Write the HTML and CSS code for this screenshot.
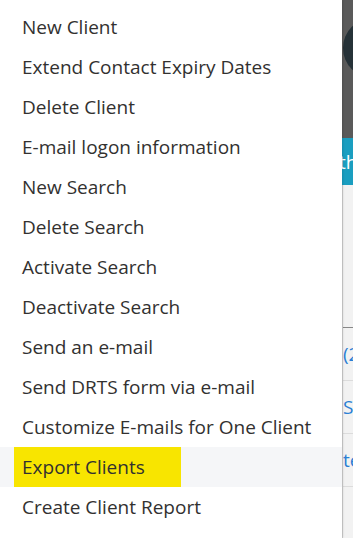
FILE: index.html
```html
<!DOCTYPE html>
<html>
<head>
<meta charset="utf-8">
<link rel="stylesheet" href="styles.css">
</head>
<body>
<div class="page">
  <ul class="menu">
    <li class="item">New Client</li>
    <li class="item">Extend Contact Expiry Dates</li>
    <li class="item">Delete Client</li>
    <li class="item">E-mail logon information</li>
    <li class="item">New Search</li>
    <li class="item">Delete Search</li>
    <li class="item">Activate Search</li>
    <li class="item">Deactivate Search</li>
    <li class="item">Send an e-mail</li>
    <li class="item">Send DRTS form via e-mail</li>
    <li class="item">Customize E-mails for One Client</li>
    <li class="item hover"><span class="mark">Export Clients</span></li>
    <li class="item">Create Client Report</li>
  </ul>
  <div class="behind">
    <div class="header"><div class="avatar"></div></div>
    <div class="tab">th</div>
    <div class="table">
      <div class="blank"></div>
      <div class="row">(2</div>
      <div class="row">Sa</div>
      <div class="row">te</div>
      <div class="row"></div>
    </div>
  </div>
</div>
</body>
</html>
```
FILE: styles.css
```css
html, body { margin: 0; padding: 0; }
body { font-family: "Open Sans", "Noto Sans", sans-serif; background: #fff; overflow: hidden; }
.page { display: flex; width: 353px; height: 538px; }
.menu {
  list-style: none; margin: 0; padding: 7px 0 0 0;
  width: 342px; flex: none; background: #fff;
  box-shadow: 1px 0 2px rgba(0,0,0,0.12);
  position: relative; z-index: 1;
}
.item {
  height: 40px; display: flex; align-items: center;
  padding-left: 22px; font-size: 19px; color: #323130;
}
.item.hover { background: #f5f6f8; padding-left: 14px; }
.mark {
  background: #f8e500; height: 40px; display: flex; align-items: center;
  padding: 0 12px 0 8px; width: 147px; flex: none;
}
.behind { flex: 1; display: flex; flex-direction: column; background: #f2f2f2; overflow: hidden; }
.header { height: 138px; flex: none; background: #5a5a5a; position: relative; }
.avatar {
  position: absolute; left: 1px; top: 18px; width: 60px; height: 60px;
  border-radius: 50%; background: #263238;
}
.tab {
  height: 47px; flex: none; background: #1a9ec0; color: #fff; font-size: 19px;
  display: flex; align-items: center; text-indent: -3px; white-space: nowrap;
}
.table { flex: 1; border-left: 1px solid #cfcfcf; display: flex; flex-direction: column; background: #f2f2f2; }
.blank { height: 142px; flex: none; border-bottom: 1px solid #888; }
.row {
  height: 52px; flex: none; border-bottom: 1px solid #dcdcdc; color: #2a7fd4;
  font-size: 19px; display: flex; align-items: center; white-space: nowrap;
}
```
